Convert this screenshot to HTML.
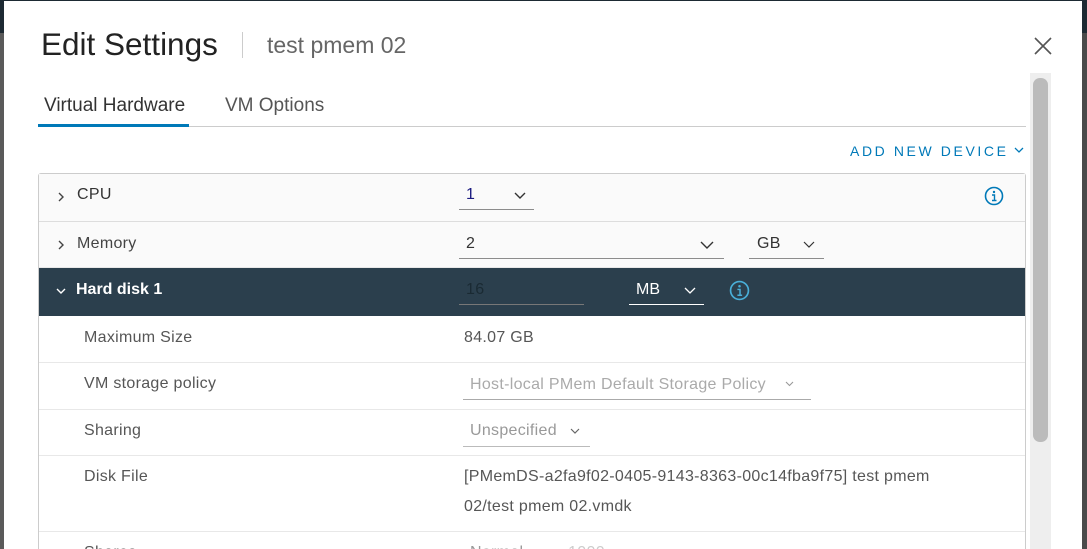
<!DOCTYPE html>
<html style="overflow:hidden;height:549px"><head><meta charset="utf-8"><style>
*{box-sizing:border-box;margin:0;padding:0}
body{width:1087px;height:549px;overflow:hidden;background:#4a4a4a;font-family:"Liberation Sans",sans-serif;position:relative}
.a{position:absolute;white-space:nowrap}
.t{font-size:16px;letter-spacing:0.3px;color:#565656}
.row{position:absolute;left:39px;width:986px;border-bottom:1px solid #e8e8e8}
.ul{position:absolute;border-bottom:1px solid #8c8c8c}
svg{position:absolute}
</style></head><body>
<div class="a" style="left:0;top:0;width:1087px;height:33px;background:#1d2a33"></div>
<div class="a" style="left:0;top:33px;width:4px;height:516px;background:#5a5a5a"></div>
<div class="a" style="left:4px;top:1px;width:1078px;height:548px;background:#fff;overflow:hidden">
</div>

<div class="a" style="left:41px;top:26px;font-size:31.5px;color:#222">Edit Settings</div>
<div class="a" style="left:242px;top:32px;width:1px;height:26px;background:#ccc"></div>
<div class="a" style="left:267px;top:32px;font-size:23px;color:#666">test pmem 02</div>
<svg style="left:1034px;top:37px" width="18" height="18" viewBox="0 0 18 18"><path d="M1 1L17 17M17 1L1 17" stroke="#555" stroke-width="1.6"/></svg>

<div class="a" style="left:44px;top:95px;font-size:19px;color:#333">Virtual Hardware</div>
<div class="a" style="left:225px;top:95px;font-size:19px;color:#555">VM Options</div>
<div class="a" style="left:38px;top:126px;width:988px;height:1px;background:#ccc"></div>
<div class="a" style="left:38px;top:124px;width:151px;height:3px;background:#0079b8"></div>

<div class="a" style="left:850px;top:143px;font-size:14px;letter-spacing:2.6px;color:#0079b8">ADD NEW DEVICE</div>
<svg style="left:1014px;top:146px" width="10" height="8" viewBox="0 0 10 8"><path d="M1 2L5 6L9 2" stroke="#0079b8" stroke-width="1.3" fill="none"/></svg>

<div class="a" style="left:1030px;top:73px;width:21px;height:476px;background:#eee"></div>
<div class="a" style="left:1033px;top:78px;width:15px;height:364px;background:#bbb;border-radius:7px"></div>

<div class="a" style="left:38px;top:173px;width:988px;height:376px;border:1px solid #ccc;border-bottom:0;border-radius:3px 3px 0 0;background:#fff"></div>
<div class="row" style="top:174px;height:48px;background:#fafafa;border-bottom:1px solid #ddd"></div>
<div class="row" style="top:222px;height:46px;background:#fafafa"></div>
<div class="row" style="top:268px;height:48px;background:#2b3f4d;border:0"></div>
<div class="row" style="top:316px;height:47px"></div>
<div class="row" style="top:363px;height:47px"></div>
<div class="row" style="top:410px;height:46px"></div>
<div class="row" style="top:456px;height:76px"></div>

<svg style="left:57px;top:191px" width="8" height="12" viewBox="0 0 8 12"><path d="M2 2L6 6L2 10" stroke="#444" stroke-width="1.4" fill="none"/></svg>
<div class="a t" style="left:77px;top:186px;color:#333">CPU</div>
<svg style="left:57px;top:239px" width="8" height="12" viewBox="0 0 8 12"><path d="M2 2L6 6L2 10" stroke="#444" stroke-width="1.4" fill="none"/></svg>
<div class="a t" style="left:77px;top:235px;color:#444">Memory</div>
<svg style="left:55px;top:287px" width="12" height="8" viewBox="0 0 12 8"><path d="M2 2L6 6L10 2" stroke="#fff" stroke-width="1.4" fill="none"/></svg>
<div class="a" style="left:76px;top:281px;font-size:16px;color:#fff;font-weight:bold">Hard disk 1</div>

<div class="a t" style="left:466px;top:186px;color:#1a1a80">1</div>
<div class="ul" style="left:459px;top:191px;width:75px;height:19px"></div>
<svg style="left:514px;top:192px" width="12" height="8" viewBox="0 0 12 8"><path d="M1 1L6 6L11 1" stroke="#333" stroke-width="1.4" fill="none"/></svg>
<svg style="left:984px;top:186px" width="20" height="20" viewBox="0 0 20 20"><circle cx="10" cy="10" r="8.5" stroke="#0079b8" stroke-width="1.6" fill="none"/><circle cx="10" cy="6" r="1.2" fill="#0079b8"/><path d="M8 9H10.5V14.5M8 14.5H12.5" stroke="#0079b8" stroke-width="1.4" fill="none"/></svg>

<div class="a t" style="left:466px;top:235px;color:#333">2</div>
<div class="ul" style="left:459px;top:240px;width:265px;height:19px"></div>
<svg style="left:700px;top:241px" width="14" height="9" viewBox="0 0 14 9"><path d="M1 1L7 7L13 1" stroke="#333" stroke-width="1.4" fill="none"/></svg>
<div class="a t" style="left:757px;top:235px;color:#333">GB</div>
<div class="ul" style="left:749px;top:240px;width:75px;height:19px"></div>
<svg style="left:803px;top:241px" width="12" height="8" viewBox="0 0 12 8"><path d="M1 1L6 6L11 1" stroke="#333" stroke-width="1.2" fill="none"/></svg>

<div class="a t" style="left:466px;top:281px;color:#1a2a33">16</div>
<div class="ul" style="left:459px;top:286px;width:125px;height:19px;border-color:#777"></div>
<div class="a" style="left:636px;top:281px;font-size:16px;color:#fff">MB</div>
<div class="ul" style="left:629px;top:286px;width:75px;height:19px;border-color:#fff"></div>
<svg style="left:684px;top:287px" width="12" height="8" viewBox="0 0 12 8"><path d="M1 1L6 6L11 1" stroke="#fff" stroke-width="1.3" fill="none"/></svg>
<svg style="left:729px;top:280px" width="21" height="21" viewBox="0 0 20 20"><circle cx="10" cy="10" r="8.5" stroke="#49afd9" stroke-width="1.6" fill="none"/><circle cx="10" cy="6" r="1.2" fill="#49afd9"/><path d="M8 9H10.5V14.5M8 14.5H12.5" stroke="#49afd9" stroke-width="1.4" fill="none"/></svg>

<div class="a t" style="left:84px;top:329px">Maximum Size</div>
<div class="a t" style="left:464px;top:329px">84.07 GB</div>
<div class="a t" style="left:84px;top:375px">VM storage policy</div>
<div class="a t" style="left:470px;top:376px;color:#aaa">Host-local PMem Default Storage Policy</div>
<svg style="left:785px;top:381px" width="9" height="6" viewBox="0 0 9 6"><path d="M1 1L4.5 4.5L8 1" stroke="#999" stroke-width="1.1" fill="none"/></svg>
<div class="ul" style="left:463px;top:381px;width:348px;height:19px;border-color:#aaa"></div>
<div class="a t" style="left:84px;top:422px">Sharing</div>
<div class="a t" style="left:470px;top:422px;color:#999">Unspecified</div>
<svg style="left:570px;top:428px" width="10" height="7" viewBox="0 0 10 7"><path d="M1 1L5 5L9 1" stroke="#666" stroke-width="1.2" fill="none"/></svg>
<div class="ul" style="left:463px;top:428px;width:127px;height:19px;border-color:#bbb"></div>
<div class="a t" style="left:84px;top:468px">Disk File</div>
<div class="a t" style="left:464px;top:468px">[PMemDS-a2fa9f02-0405-9143-8363-00c14fba9f75] test pmem</div>
<div class="a t" style="left:464px;top:498px">02/test pmem 02.vmdk</div>
<div class="a" style="left:0;top:540px;width:1030px;height:9px;overflow:hidden">
<div class="a t" style="left:84px;top:4px">Shares</div>
<div class="a t" style="left:470px;top:4px;color:#999">Normal <span style="color:#ccc;margin-left:40px">1000</span></div>
</div>
</body></html>
